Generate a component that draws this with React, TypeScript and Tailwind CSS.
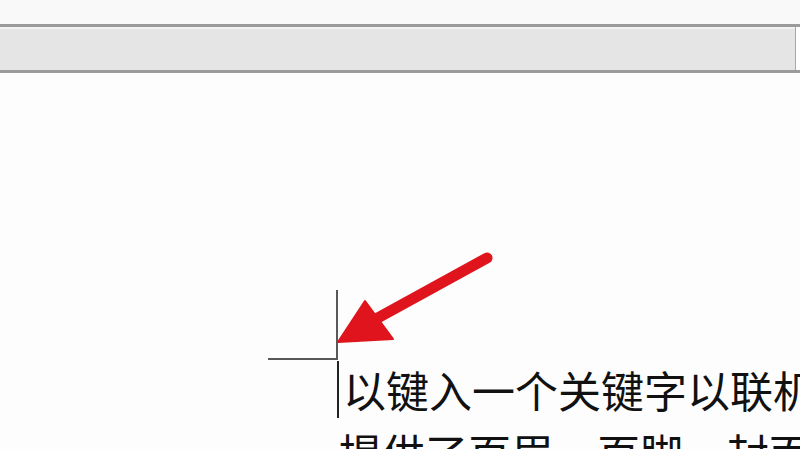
export default function App() {
  return (
    <div className="relative w-[800px] h-[449px] overflow-hidden bg-[#fdfdfd]">
      {/* ribbon strip above the ruler */}
      <div className="h-[24px] bg-[#f9f9f9]" />
      {/* ruler / toolbar bar */}
      <div className="h-[49px] border-y-[3px] border-[#9b9b9b] bg-[#e5e5e5] flex">
        <div className="flex-1 border-t-2 border-[#f2f2f2]" />
        <div className="w-[5px] border-l border-[#a8a8a8] bg-white" />
      </div>

      {/* page */}
      <div className="pt-[217px]">
        {/* crop mark */}
        <div className="ml-[268px] w-[70px] h-[70px] border-r-2 border-b-2 border-[#585858]" />
        <div
          className="-mt-[2px] pl-[337px] whitespace-nowrap text-[43px] leading-[63px] font-normal text-[#111]"
          style={{ fontFamily: '"Noto Sans CJK SC", "Noto Sans", sans-serif' }}
        >
          <div className="flex items-center">
            <span className="shrink-0 w-[2px] h-[57px] bg-[#222] mr-[4px]" />
            <span>以键入一个关键字以联机</span>
          </div>
          <div className="pl-[2px]">提供了页眉、页脚、封面</div>
        </div>
      </div>

      {/* annotation arrow */}
      <svg className="absolute inset-0 pointer-events-none" width="800" height="449" viewBox="0 0 800 449">
        <line x1="487" y1="258" x2="374" y2="320" stroke="#e0141c" strokeWidth="11" strokeLinecap="round" />
        <polygon points="338,342 365,301 393,339" fill="#e0141c" stroke="#e0141c" strokeWidth="2" strokeLinejoin="round" />
      </svg>
    </div>
  );
}
